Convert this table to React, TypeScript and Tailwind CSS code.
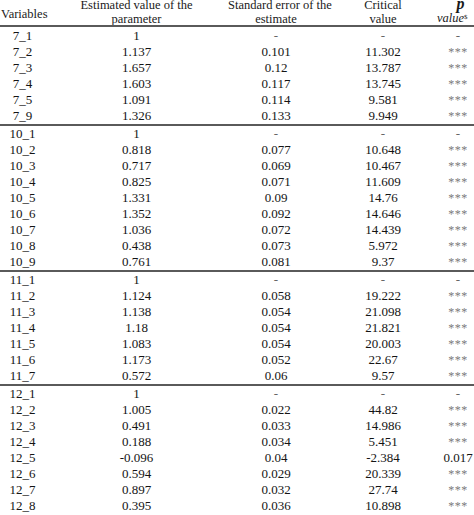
const groups: string[][][] = [
  [
    ['7_1', '1', '-', '-', '-'],
    ['7_2', '1.137', '0.101', '11.302', '***'],
    ['7_3', '1.657', '0.12', '13.787', '***'],
    ['7_4', '1.603', '0.117', '13.745', '***'],
    ['7_5', '1.091', '0.114', '9.581', '***'],
    ['7_9', '1.326', '0.133', '9.949', '***'],
  ],
  [
    ['10_1', '1', '-', '-', '-'],
    ['10_2', '0.818', '0.077', '10.648', '***'],
    ['10_3', '0.717', '0.069', '10.467', '***'],
    ['10_4', '0.825', '0.071', '11.609', '***'],
    ['10_5', '1.331', '0.09', '14.76', '***'],
    ['10_6', '1.352', '0.092', '14.646', '***'],
    ['10_7', '1.036', '0.072', '14.439', '***'],
    ['10_8', '0.438', '0.073', '5.972', '***'],
    ['10_9', '0.761', '0.081', '9.37', '***'],
  ],
  [
    ['11_1', '1', '-', '-', '-'],
    ['11_2', '1.124', '0.058', '19.222', '***'],
    ['11_3', '1.138', '0.054', '21.098', '***'],
    ['11_4', '1.18', '0.054', '21.821', '***'],
    ['11_5', '1.083', '0.054', '20.003', '***'],
    ['11_6', '1.173', '0.052', '22.67', '***'],
    ['11_7', '0.572', '0.06', '9.57', '***'],
  ],
  [
    ['12_1', '1', '-', '-', '-'],
    ['12_2', '1.005', '0.022', '44.82', '***'],
    ['12_3', '0.491', '0.033', '14.986', '***'],
    ['12_4', '0.188', '0.034', '5.451', '***'],
    ['12_5', '-0.096', '0.04', '-2.384', '0.017'],
    ['12_6', '0.594', '0.029', '20.339', '***'],
    ['12_7', '0.897', '0.032', '27.74', '***'],
    ['12_8', '0.395', '0.036', '10.898', '***'],
  ],
]

const cols = 'grid grid-cols-[45px_183px_96px_118px_32px]'

function Row({ cells }: { cells: string[] }) {
  return (
    <div className={`${cols} h-4 text-[13px] leading-4 text-[#141414]`}>
      {cells.map((c, i) => (
        <div
          key={i}
          className={`text-center whitespace-nowrap ${
            c === '***' ? 'text-[12px] text-[#7a7a7a] tracking-[0.5px]' : ''
          } ${c === '-' ? 'text-[#666]' : ''}`}
        >
          {c}
        </div>
      ))}
    </div>
  )
}

export default function App() {
  return (
    <div className="w-[474px] h-[515px] overflow-hidden bg-white font-['Liberation_Serif','Times_New_Roman',serif]">
      <div className={`${cols} h-[25px] overflow-hidden text-[12.5px] leading-[14px] text-[#1a1a1a]`}>
        <div className="flex items-center justify-start pl-[1px] pt-[2px]">Variables</div>
        <div className="-mt-[2px] text-center whitespace-nowrap">
          Estimated value of the
          <br />
          parameter
        </div>
        <div className="-mt-[2px] text-center whitespace-nowrap">
          Standard error of the
          <br />
          estimate
        </div>
        <div className="-mt-[2px] text-center whitespace-nowrap">
          Critical
          <br />
          value
        </div>
        <div className="-mt-[4px] -ml-[5px] whitespace-nowrap italic">
          <div className="text-center font-bold text-[16px] leading-[16px] pl-[10px]">p</div>
          <div className="leading-[12px]">
            value<sup className="text-[7px] not-italic">$</sup>
          </div>
        </div>
      </div>
      <div className="h-[2px] bg-[#5a5a5a]" />
      {groups.map((g, gi) => (
        <div key={gi}>
          {gi > 0 && <div className="h-[2px] bg-[#5a5a5a]" />}
          <div className={gi === 0 ? 'pt-[1px]' : ''}>
            {g.map((r) => (
              <Row key={r[0]} cells={r} />
            ))}
          </div>
        </div>
      ))}
    </div>
  )
}
